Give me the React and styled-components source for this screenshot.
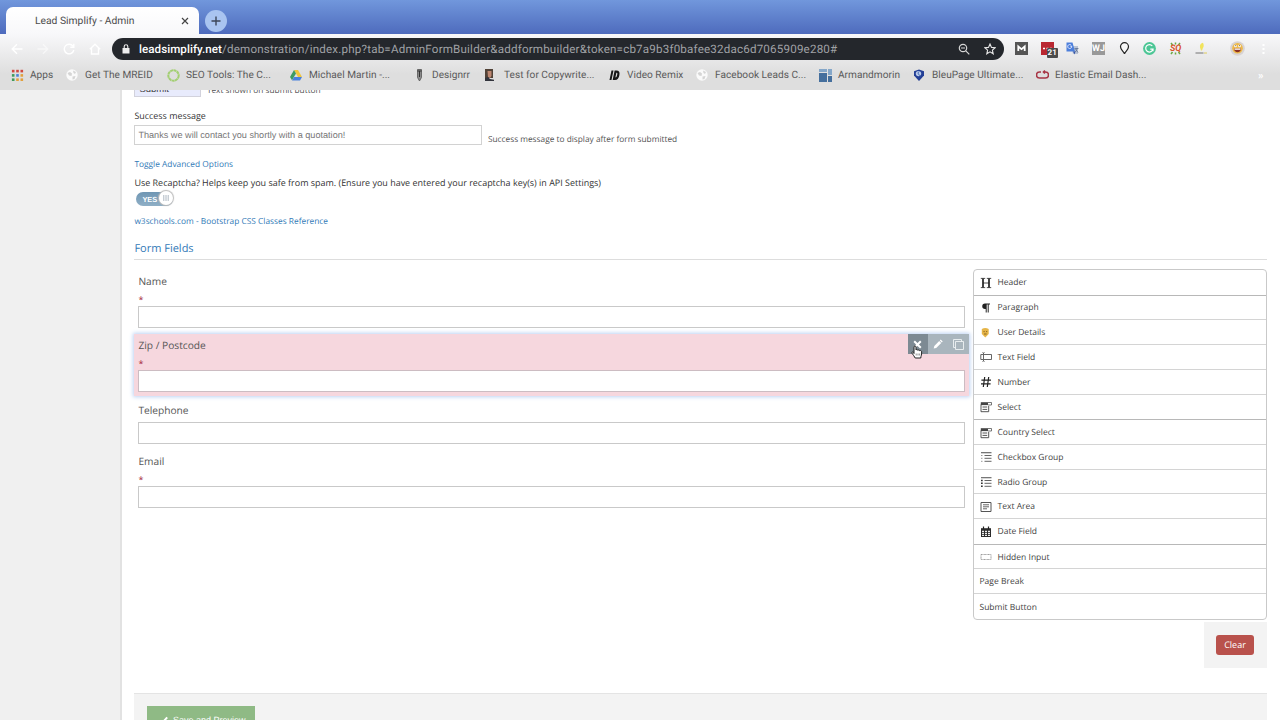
import React, { useState } from 'react'
import styled, { createGlobalStyle } from 'styled-components'

const bookmarks = [
  { name: 'Apps', icon: 'apps', width: 55 },
  { name: 'Get The MREID', icon: 'globe', width: 101 },
  { name: 'SEO Tools: The C...', icon: 'ring', width: 123 },
  { name: 'Michael Martin -...', icon: 'drive', width: 123 },
  { name: 'Designrr', icon: 'pen', width: 71 },
  { name: 'Test for Copywrite...', icon: 'photo', width: 124, gap: 7 },
  { name: 'Video Remix', icon: 'remix', width: 88 },
  { name: 'Facebook Leads C...', icon: 'globe', width: 123 },
  { name: 'Armandmorin', icon: 'blocks', width: 94 },
  { name: 'BleuPage Ultimate...', icon: 'shield', width: 123 },
  { name: 'Elastic Email Dash...', icon: 'elastic', width: 120 },
]

const fields = [
  { label: 'Name', required: true },
  { label: 'Zip / Postcode', required: true, active: true },
  { label: 'Telephone' },
  { label: 'Email', required: true },
]

const controls = [
  { name: 'Header', icon: 'header', dark: true },
  { name: 'Paragraph', icon: 'paragraph' },
  { name: 'User Details', icon: 'user' },
  { name: 'Text Field', icon: 'text' },
  { name: 'Number', icon: 'number' },
  { name: 'Select', icon: 'select', dark: true },
  { name: 'Country Select', icon: 'select' },
  { name: 'Checkbox Group', icon: 'checks' },
  { name: 'Radio Group', icon: 'radios' },
  { name: 'Text Area', icon: 'area' },
  { name: 'Date Field', icon: 'date', dark: true },
  { name: 'Hidden Input', icon: 'hidden' },
  { name: 'Page Break' },
  { name: 'Submit Button' },
]

function BookmarkIcon({ type }) {
  const art = {
    apps: [0, 4.3, 8.6].map((y, r) =>
      [0, 4.3, 8.6].map((x, c) => (
        <rect key={`${x}${y}`} x={x + 0.9} y={y + 0.8} width='2.6' height='2.6'
          fill={[['#d0473e', '#d0473e', '#d0473e'], ['#3f9a5b', '#4a80d6', '#e2a03c'], ['#3f9a5b', '#e2a03c', '#e2a03c']][r][c]} />
      ))
    ),
    globe: <>
      <circle cx='6' cy='6' r='5.7' fill='#fafafa' />
      <path d='M1.5 4 4 3l2 1.5L5.5 7 3 6.5zM7 1.5 10 3 9 5 7.5 4zM6.5 7.5 9.5 7 8.5 10 6.5 10.5z' fill='#d5d5d5' />
    </>,
    ring: <circle cx='6.500' cy='6.500' r='5.200' fill='none' stroke='#a3cf72' strokeWidth='2' strokeDasharray='3 .4' />,
    drive: <>
      <path d='M4 1h4l4 7H8z' fill='#f0c63c' />
      <path d='M4 1 0 8l2 3.3L6 4.5z' fill='#3d9b62' />
      <path d='M4 8h8l-2 3.4H2z' fill='#4b81dc' />
    </>,
    pen: <>
      <path d='M4.500 .5h4v8l-2 3.500-2-3.500z' fill='#8a8a8a' stroke='#555' strokeWidth='.8' />
      <path d='M4.500 2h4M6.500 2v6' stroke='#333' strokeWidth='1' />
    </>,
    photo: <>
      <path d='M1 0h8v9H1z' fill='#514237' />
      <path d='M3.500 2h4v5L6 9 4 8z' fill='#bd8670' />
      <path d='M1 9l3-1 2 2 4 .8V12H1z' fill='#32343c' />
    </>,
    remix: <>
      <path d='M3.500 1.500h2L3.500 11h-2z' fill='#171717' />
      <path d='M7.500 2.600h1c1.700 0 2.200 1 1.800 3.200-.4 2.600-1.300 4-3.300 4H6z' fill='none' stroke='#171717' strokeWidth='2.200' />
    </>,
    blocks: <>
      <path d='M0 0h8v3H0zM9 0h4v6H9z' fill='#85a7c9' />
      <path d='M0 4h8v9H0zM9 7h4v6H9z' fill='#456f9d' />
    </>,
    shield: <>
      <path d='M1 2.200 6 .500l5 1.700v4.300L6 12 1 6.500z' fill='#233f96' />
      <circle cx='5.500' cy='4.600' r='2.700' fill='#b8c8e8' />
      <path d='M6 2.500c-2 2 0 4 2 4.300' stroke='#3a64b5' fill='none' />
    </>,
    elastic: <path d='M5 3H3.500a2.800 2.800 0 0 0 0 6H9.500a2.800 2.800 0 0 0 0-6H7.500M8.900 1.500 7.400 3l1.500 1.500' fill='none' stroke='#a73545' strokeWidth='1.500' />,
  }
  return <svg width='13' height='13' viewBox='0 0 13 13'>{art[type]}</svg>
}

function ControlIcon({ type }) {
  const lines = <>
    <path d='M1 1h10.500v1.300H1z' fill='#777' />
    <path d='M4.500 4.500h7M4.500 7.300h7M4.500 10.300h7' stroke='#555' strokeWidth='.9' />
  </>
  const art = {
    header: <>
      <path d='M3 1.500v9M9 1.500v9' stroke='#222' strokeWidth='1.700' />
      <path d='M.8 1.400h4.400M.8 10.600h4.400M6.800 1.400h4.400M6.800 10.600h4.400M3 6h6' stroke='#222' strokeWidth='.8' />
    </>,
    paragraph: <path d='M10 1.500H5a2.700 2.700 0 0 0 0 5.500h.7v3.500h1V2.500h1v8h1v-8H10z' fill='#222' />,
    user: <>
      <path d='M1.800 2C4 .500 6.500.500 8.700 2v5L5.300 10.500 1.800 7z' fill='#e6b548' />
      <path d='M3.500 4.600h1.200M6 4.600h1.200M4 7h2.600' stroke='#8a6824' strokeWidth='1' />
    </>,
    text: <path d='M4 3.500h7.500v5H4M3 3.500H.8v5H3M3.500 2v8M2.500 1.500l1 .5 1-.5M2.500 10.500l1-.5 1 .5' stroke='#555' strokeWidth='.9' fill='none' />,
    number: <path d='M4.700 1 3.300 11M8.700 1 7.300 11M1.400 4.200h9.600M1 7.800h9.600' stroke='#222' strokeWidth='1.200' />,
    select: <>
      <path d='M1 3.500v7.200h7.700V5M2.500 6h4.700M2.500 8.400h4.700' stroke='#444' strokeWidth='.9' fill='none' />
      <path d='M.8 1.200h7.200v2.900H.8z' fill='#444' />
      <path d='M8 1.500h3.500V4H8' stroke='#555' strokeWidth='.8' fill='none' />
    </>,
    checks: <>{lines}<path d='M1 4.500h1.500M1 7.300h1.500M1 10.300h1.500' stroke='#999' strokeWidth='1' /></>,
    radios: <>{lines}<path d='M1 4.500h1.700M1 7.300h1.700M1 10.300h1.700' stroke='#333' strokeWidth='1.500' /></>,
    area: <>
      <path d='M1 1.500h10v9H1z' stroke='#555' fill='none' />
      <path d='M3 3.800h6M3 5.800h6M3 7.800h4' stroke='#555' strokeWidth='.9' />
    </>,
    date: <>
      <path d='M1 2.200h10v8.800H1z' fill='#2b2b2b' />
      <path d='M2 4.800h2v1.200H2zM5 4.800h2v1.200H5zM8 4.800h2v1.200H8zM2 6.800h2V8H2zM5 6.800h2V8H5zM8 6.800h2V8H8zM2 8.800h2V10H2zM5 8.800h2V10H5zM8 8.800h2V10H8z' fill='#eee' />
      <path d='M3.500.500v2.500M8.500.500v2.500' stroke='#222' strokeWidth='1.200' />
    </>,
    hidden: <path d='M1 3.500h10v5H1z' stroke='#888' strokeWidth='.8' strokeDasharray='1 .4' fill='none' />,
  }
  return <svg width='12' height='12' viewBox='0 0 12 12'>{art[type]}</svg>
}

function Browser() {
  return <Chrome>
    <TabStrip>
      <Tab>
        <span>Lead Simplify - Admin</span>
        <svg width='8' height='8' viewBox='0 0 8 8'><path d='m1 1 6 6M7 1 1 7' stroke='#444' strokeWidth='1.200' /></svg>
      </Tab>
      <NewTab>
        <svg width='10' height='10' viewBox='0 0 10 10'><path d='M5 .5v9M.5 5h9' stroke='#3c4658' strokeWidth='1.400' /></svg>
      </NewTab>
    </TabStrip>

    <Toolbar>
      <Nav>
        <svg width='12' height='12' viewBox='0 0 12 12'><path d='M11.500 6H1.500M6 1.200 1.200 6 6 10.800' /></svg>
        <NavFaded width='12' height='12' viewBox='0 0 12 12'><path d='M.5 6h10M6 1.200 10.800 6 6 10.800' /></NavFaded>
        <svg width='12' height='12' viewBox='0 0 12 12'><path d='M10 3.200A4.800 4.800 0 1 0 10.800 7M10.800.8v3.500H7.300' /></svg>
        <svg width='12' height='12' viewBox='0 0 12 12'><path d='M.8 6.200 6 1.200l5.200 5M2.500 5v6h7V5' /></svg>
      </Nav>
      <AddressBar>
        <svg width='8' height='10' viewBox='0 0 8 10'>
          <path d='M.5 4h7v5.500h-7z' fill='#eee' />
          <path d='M2.200 4V2.600a1.800 1.800 0 0 1 3.600 0V4' fill='none' stroke='#eee' strokeWidth='1.100' />
        </svg>
        <Url><b>leadsimplify.net</b>/demonstration/index.php?tab=AdminFormBuilder&amp;addformbuilder&amp;token=cb7a9b3f0bafee32dac6d7065909e280#</Url>
        <svg width='12' height='12' viewBox='0 0 12 12'>
          <path d='M7.800 7.800 11.300 11.300M3 5h4M8.700 5a3.700 3.700 0 1 1-7.400 0 3.700 3.700 0 0 1 7.400 0z' fill='none' stroke='#d6d6d6' strokeWidth='1.200' />
        </svg>
        <Star width='12' height='12' viewBox='0 0 12 12'>
          <path d='m6 1 1.500 3.400 3.700.3-2.800 2.500.8 3.600L6 8.900l-3.200 1.900.8-3.600L.8 4.700l3.700-.3z' fill='none' stroke='#e6e6e6' strokeWidth='1.100' />
        </Star>
      </AddressBar>
      <Extensions>
        <Ext bg='#555'>
          <svg width='13' height='13' viewBox='0 0 13 13'><path d='M3.300 9V4.500l3.200 2.600 3.200-2.600V9' stroke='#fff' strokeWidth='1.800' fill='none' /></svg>
        </Ext>
        <Ext bg='#b92731'>
          <svg width='13' height='13' viewBox='0 0 13 13'><path d='M2 6.500h2M5.500 6.500h2M9 6.500h2' stroke='#fff' strokeWidth='1.700' /></svg>
          <Count>21</Count>
        </Ext>
        <Ext>
          <svg width='13' height='13' viewBox='0 0 13 13'>
            <path d='M5 4h7v8H7z' fill='#b9c3d5' />
            <path d='M.5.500h6l2.500 9H.500z' fill='#4c7fdb' />
            <path d='M6 4.200H4.300M5.700 4.300A2 2 0 1 1 5 3' stroke='#eef' fill='none' strokeWidth='.9' />
            <path d='M8.500 6.500h4M11 6c0 2-1 3.500-2 4M9.500 7l2.500 3.500' stroke='#5f7191' fill='none' strokeWidth='.8' />
            <path d='m7 9.500 1.500 3 1-3z' fill='#3555a6' />
          </svg>
        </Ext>
        <Ext bg='#999' color='#fff' size={9}>WJ</Ext>
        <Ext>
          <svg width='13' height='13' viewBox='0 0 13 13'><path d='M6.500 12C6 9.500 2.500 8 2.500 4.700a4 4 0 0 1 8 0C10.500 8 7 9.500 6.500 12z' fill='#f8f8f8' stroke='#222' strokeWidth='1.200' /></svg>
        </Ext>
        <Ext>
          <svg width='13' height='13' viewBox='0 0 13 13'>
            <circle cx='6.500' cy='6.500' r='6.400' fill='#4cc695' />
            <path d='M9.300 4A3.700 3.700 0 1 0 10 7.200H7.300M10 7.200v2' stroke='#fff' fill='none' strokeWidth='1.200' />
          </svg>
        </Ext>
        <Ext>
          <Burst width='13' height='13' viewBox='0 0 13 13'>
            <path d='M2 1l1.500 2M6.500.500v2M11 1 9.500 3M2 12l1.500-2M6.500 12.500v-2M11 12l-1.500-2' stroke='#6ba844' strokeWidth='1.500' />
          </Burst>
          <Sq>SQ</Sq>
        </Ext>
        <Ext>
          <svg width='13' height='13' viewBox='0 0 13 13'>
            <path d='M6 8.500 5 5.500C4.500 3 6 1 8 .8c1 2.200 1 4-.2 5.500L7 8.500z' fill='#f1e35c' />
            <path d='M.5 11h8' stroke='#666' strokeWidth='.9' /><path d='M9 11h3' stroke='#dfc84d' strokeWidth='.9' />
          </svg>
        </Ext>
      </Extensions>
      <Avatar>
        <svg width='15' height='15' viewBox='0 0 15 15'>
          <circle cx='7.500' cy='7.500' r='7.300' fill='#d8d3d3' />
          <circle cx='7.500' cy='7.300' r='5.300' fill='#edb849' />
          <path d='M4 7.500h7c0 5-7 5-7 0z' fill='#8b3024' /><path d='M4.500 7.500h6v1.300h-6z' fill='#fff' />
          <circle cx='5.500' cy='5' r='1.300' fill='#fff' /><circle cx='9.500' cy='5' r='1.300' fill='#fff' />
          <path d='M5.300 4.700h.8M9.200 4.700h.8' stroke='#333' strokeWidth='.9' />
        </svg>
        <svg width='3' height='12' viewBox='0 0 3 12'><path d='M.5 1h2v2h-2zM.5 5h2v2h-2zM.5 9h2v2h-2z' fill='#fff' /></svg>
      </Avatar>
    </Toolbar>

    <Bookmarks>
      {bookmarks.map((b, i) => (
        <Bookmark key={i} width={b.width} gap={b.gap}><BookmarkIcon type={b.icon} />{b.name}</Bookmark>
      ))}
      <More>»</More>
    </Bookmarks>
  </Chrome>
}

function Field({ label, required, active }) {
  return <FieldBox active={active} required={required}>
    <FieldLabel>{label}</FieldLabel>
    {required && <Required>*</Required>}
    <FieldInput required={required} active={active} />
    {active && <Actions>
      <Action hover>
        <svg width='9' height='9' viewBox='0 0 9 9'><path d='m1.200 1.200 6.600 6.600M7.800 1.200 1.200 7.800' stroke='#fff' strokeWidth='2' /></svg>
      </Action>
      <Action>
        <svg width='10' height='10' viewBox='0 0 10 10'><path d='M.7 9.500 1.300 7 6.200 2l2 2-5 4.900zM6.800 1.400l.9-.8 2 2-.9.8z' fill='#fff' /></svg>
      </Action>
      <Action>
        <svg width='11' height='11' viewBox='0 0 11 11'><path d='M2.500 8.500h-2v-8h8v2M2.500 2.500h8v8h-8z' fill='none' stroke='#eef2f4' strokeWidth='.9' /></svg>
      </Action>
      <Pointer width='12' height='14' viewBox='0 0 12 14'>
        <path d='M3 8.500V2c0-1.500 2-1.500 2 0v3c.5-.8 1.700-.5 1.800.3.500-.6 1.600-.4 1.800.4.700-.5 2 0 2 1V9c0 1.500-.8 2-.8 4H4.200C3.500 11 1.500 9.500.8 8 .5 6.800 2 6.500 3 8.500z' fill='#fff' stroke='#222' strokeWidth='1' />
        <path d='M5.200 8.500v2M7 8.500v2M8.700 8.500v2' stroke='#444' strokeWidth='.6' />
      </Pointer>
    </Actions>}
  </FieldBox>
}

function App() {

  const [recaptcha, setRecaptcha] = useState(true)

  return <Page>
    <GlobalStyle />
    <Browser />
    <Body>
      <Sidebar />
      <Content>
        <SubmitRow>
          <SubmitInput>Submit</SubmitInput>
          <SubmitHint>Text shown on submit button</SubmitHint>
        </SubmitRow>
        <Label>Success message</Label>
        <MessageRow>
          <MessageInput>Thanks we will contact you shortly with a quotation!</MessageInput>
          <Hint>Success message to display after form submitted</Hint>
        </MessageRow>
        <Link href='#'>Toggle Advanced Options</Link>
        <Question>Use Recaptcha? Helps keep you safe from spam. (Ensure you have entered your recaptcha key(s) in API Settings)</Question>
        <Switch onClick={() => setRecaptcha(!recaptcha)}>
          {recaptcha ? 'YES' : 'NO'}
          <Knob>
            <svg width='6' height='6' viewBox='0 0 6 6'><path d='M.8 0v6M3 0v6M5.200 0v6' stroke='#a5b0bb' strokeWidth='.9' /></svg>
          </Knob>
        </Switch>
        <Link href='#' last>w3schools.com - Bootstrap CSS Classes Reference</Link>
        <Title>Form Fields</Title>

        <Builder>
          <Stage>
            {fields.map((f) => <Field key={f.label} {...f} />)}
          </Stage>
          <Side>
            <Controls>
              {controls.map((c) => (
                <Control key={c.name} dark={c.dark}>
                  {c.icon && <ControlIcon type={c.icon} />}
                  {c.name}
                </Control>
              ))}
            </Controls>
            <ClearBox><ClearButton>Clear</ClearButton></ClearBox>
          </Side>
        </Builder>

        <Footer>
          <SaveButton>
            <svg width='10' height='9' viewBox='0 0 10 9'><path d='m.8 5 2.700 2.700L9.200 1.300' fill='none' stroke='#fff' strokeWidth='2' /></svg>
            Save and Preview
          </SaveButton>
        </Footer>
      </Content>
    </Body>
  </Page>
}

export default App


const GlobalStyle = createGlobalStyle`
  * { box-sizing: border-box; }
  body { margin: 0; background: #fff; overflow: hidden; }
  svg { flex: none; display: block; }
`
const Page = styled.div`
  width: 1280px;
  height: 720px;
  overflow: hidden;
  display: flex;
  flex-direction: column;
  font-family: 'Open Sans', 'Noto Sans', sans-serif;
  font-size: 9px;
  color: #333;
  text-rendering: geometricPrecision;
`
const Chrome = styled.div`
  height: 90px;
  flex: none;
  display: flex;
  flex-direction: column;
  font-family: Roboto, 'Liberation Sans', sans-serif;
  background: linear-gradient(#f8f8fa 34px, #dedede 74px);
`
const TabStrip = styled.div`
  height: 34px;
  display: flex;
  align-items: flex-end;
  padding-left: 6px;
  background: linear-gradient(#7197dc, #4e6bbd);
`
const Tab = styled.div`
  width: 193px;
  height: 27px;
  padding: 0 10px 0 29px;
  display: flex;
  align-items: center;
  justify-content: space-between;
  border-radius: 7px 7px 0 0;
  background: linear-gradient(#fff, #f8f8fa);
  font-size: 10.3px;
  color: #4c4c4c;
`
const NewTab = styled.div`
  width: 22px;
  height: 22px;
  margin: 0 0 2px 6px;
  border-radius: 50%;
  display: flex;
  align-items: center;
  justify-content: center;
  background: #a9c4f0;
`
const Toolbar = styled.div`
  height: 29px;
  display: flex;
  align-items: center;
`
const Nav = styled.div`
  width: 112px;
  padding-left: 11px;
  display: flex;
  gap: 14px;
  fill: none;
  stroke: #fff;
  stroke-width: 1.4;
`
const NavFaded = styled.svg`
  opacity: .55;
`
const AddressBar = styled.div`
  width: 892px;
  height: 22px;
  border-radius: 11px;
  padding: 0 8px 0 10px;
  display: flex;
  align-items: center;
  background: #24272c;
`
const Url = styled.div`
  flex: 1;
  padding-left: 9px;
  font-size: 11.6px;
  letter-spacing: .19px;
  color: #a0a2a6;
  white-space: nowrap;
  b { font-weight: 500; color: #fff; letter-spacing: .05px; }
`
const Star = styled.svg`
  margin-left: 14px;
`
const Extensions = styled.div`
  display: flex;
  gap: 12.7px;
  margin-left: 11px;
`
const Ext = styled.div`
  position: relative;
  width: 13px;
  height: 13px;
  display: flex;
  align-items: center;
  justify-content: center;
  background: ${(props) => props.bg || 'transparent'};
  color: ${(props) => props.color};
  font-size: ${(props) => props.size}px;
  font-weight: 700;
`
const Count = styled.span`
  position: absolute;
  left: 6px;
  top: 6px;
  width: 11px;
  height: 10px;
  border-radius: 1px;
  background: #4c4c4c;
  color: #fff;
  font-size: 8px;
  line-height: 10px;
  text-align: center;
`
const Burst = styled.svg`
  position: absolute;
`
const Sq = styled.span`
  position: relative;
  color: #d9552b;
  font-size: 9px;
  font-style: italic;
`
const Avatar = styled.div`
  margin-left: 22px;
  display: flex;
  align-items: center;
  gap: 17px;
`
const Bookmarks = styled.div`
  height: 27px;
  padding-left: 11px;
  display: flex;
  align-items: center;
  padding-bottom: 3px;
`
const Bookmark = styled.div`
  flex: none;
  width: ${(props) => props.width}px;
  display: flex;
  align-items: center;
  gap: ${(props) => props.gap || 6}px;
  font-size: 10.1px;
  letter-spacing: .03px;
  color: #5a5a5a;
  white-space: nowrap;
`
const More = styled.div`
  margin-left: 102px;
  font-size: 11px;
  font-weight: 700;
  color: #fff;
`
const Body = styled.div`
  height: 630px;
  display: flex;
`
const Sidebar = styled.div`
  width: 122px;
  background: #f0f0f0;
  border-right: 2px solid #e2e2e2;
`
const Content = styled.div`
  flex: 1;
  padding: 0 13px 0 12.4px;
  display: flex;
  flex-direction: column;
  overflow: hidden;
`
const SubmitRow = styled.div`
  height: 7px;
  flex: none;
  display: flex;
  align-items: flex-end;
  overflow: hidden;
`
const SubmitInput = styled.div`
  width: 67px;
  height: 20px;
  padding-left: 4px;
  line-height: 23px;
  border: 1px solid #d2d2dc;
  background: #e8ebfc;
  font-family: 'Liberation Sans', Arial, sans-serif;
  font-size: 9.5px;
  color: #444;
`
const SubmitHint = styled.div`
  padding-left: 5.5px;
  line-height: 12px;
  font-size: 8.3px;
  color: #555;
`
const Label = styled.div`
  height: 28px;
  flex: none;
  padding-top: 12px;
  line-height: 14px;
  font-size: 8.95px;
`
const MessageRow = styled.div`
  height: 20px;
  flex: none;
  display: flex;
`
const MessageInput = styled.div`
  width: 348px;
  padding-left: 3px;
  line-height: 19px;
  border: 1px solid #d2d2d2;
  font-family: 'Liberation Sans', Arial, sans-serif;
  font-size: 9.15px;
  color: #777;
`
const Hint = styled.div`
  padding: 7px 0 0 5.5px;
  line-height: 15px;
  font-size: 8.32px;
  color: #555;
`
const Link = styled.a`
  height: 14px;
  margin-top: ${(props) => props.last ? 8 : 12}px;
  line-height: 16px;
  font-size: 8.36px;
  color: #337ab7;
  text-decoration: none;
`
const Question = styled.div`
  margin-top: 5px;
  line-height: 14px;
  font-size: 8.97px;
`
const Switch = styled.div`
  width: 37px;
  height: 14px;
  flex: none;
  margin: 2px 0 0 2px;
  padding-left: 6px;
  position: relative;
  border-radius: 7px;
  background: linear-gradient(#6f96b3, #8fafc6);
  color: #fff;
  font: 700 7.4px/15px 'Liberation Sans', Arial, sans-serif;
`
const Knob = styled.span`
  position: absolute;
  right: 0;
  top: -1px;
  width: 14px;
  height: 14px;
  border-radius: 50%;
  background: #fff;
  box-shadow: 0 0 1px 1px #bbb;
  display: flex;
  align-items: center;
  justify-content: center;
`
const Title = styled.div`
  height: 32px;
  flex: none;
  padding-top: 12px;
  line-height: 18px;
  font-size: 11px;
  color: #337ab7;
  border-bottom: 1px solid #ddd;
`
const Builder = styled.div`
  height: 433px;
  flex: none;
  display: flex;
  justify-content: space-between;
  padding-top: 9px;
`
const Stage = styled.div`
  width: 834.4px;
`
const FieldBox = styled.div`
  position: relative;
  height: ${(props) => props.active ? 62 : props.required ? 65 : 51}px;
  margin-bottom: ${(props) => props.active ? 2 : 0}px;
  padding: ${(props) => props.active ? 4 : 5}px 4px 0;
  background: ${(props) => props.active ? '#f6d7de' : 'transparent'};
  box-shadow: ${(props) => props.active ? '0 0 4px 1px #bdd2f3' : 'none'};
`
const FieldLabel = styled.div`
  line-height: 15px;
  height: 16px;
  font-size: 10.2px;
  color: #555;
`
const Required = styled.div`
  height: 16px;
  padding-top: 4px;
  line-height: 12px;
  font-size: 9px;
  color: #a02033;
`
const FieldInput = styled.div`
  height: 22px;
  margin-top: ${(props) => props.required ? 0 : 3}px;
  border: 1px solid ${(props) => props.active ? '#ccbcc2' : '#c9c9c9'};
  background: #fff;
`
const Actions = styled.div`
  position: absolute;
  right: 0;
  top: 0;
  display: flex;
`
const Action = styled.div`
  width: 20.4px;
  height: 20px;
  display: flex;
  align-items: center;
  justify-content: center;
  background: ${(props) => props.hover ? '#7d8a93' : '#a9b5bd'};
`
const Pointer = styled.svg`
  position: absolute;
  left: 3px;
  top: 11px;
`
const Side = styled.div`
  width: 294px;
  display: flex;
  flex-direction: column;
  align-items: flex-end;
`
const Controls = styled.div`
  width: 100%;
  height: 351px;
  display: flex;
  flex-direction: column;
  border: 1px solid #c9c9c9;
  border-radius: 4px;
`
const Control = styled.div`
  height: ${(props) => props.dark ? 25.7 : 24.8}px;
  display: flex;
  align-items: center;
  gap: 6px;
  padding: 1px 0 0 5.5px;
  border-bottom: 1px solid ${(props) => props.dark ? '#b8b8b8' : '#d4d4d4'};
  font-size: 8.5px;
  color: #444;
  &:last-child { border-bottom: 0; }
`
const ClearBox = styled.div`
  width: 63px;
  height: 46px;
  margin-top: 2px;
  display: flex;
  align-items: center;
  justify-content: center;
  background: #f3f3f3;
`
const ClearButton = styled.div`
  width: 38px;
  height: 20px;
  margin-right: 1px;
  border-radius: 3px;
  background: #b9524c;
  color: #fff;
  font-size: 9px;
  line-height: 20px;
  text-align: center;
`
const Footer = styled.div`
  flex: 1;
  padding: 12px 12.5px;
  border-top: 1px solid #e4e4e4;
  background: #f3f3f3;
`
const SaveButton = styled.div`
  width: 108.5px;
  height: 28px;
  padding-left: 11px;
  display: flex;
  align-items: center;
  gap: 5px;
  background: #8fba85;
  color: #fff;
  font: 9px 'Liberation Sans', Arial, sans-serif;
`
